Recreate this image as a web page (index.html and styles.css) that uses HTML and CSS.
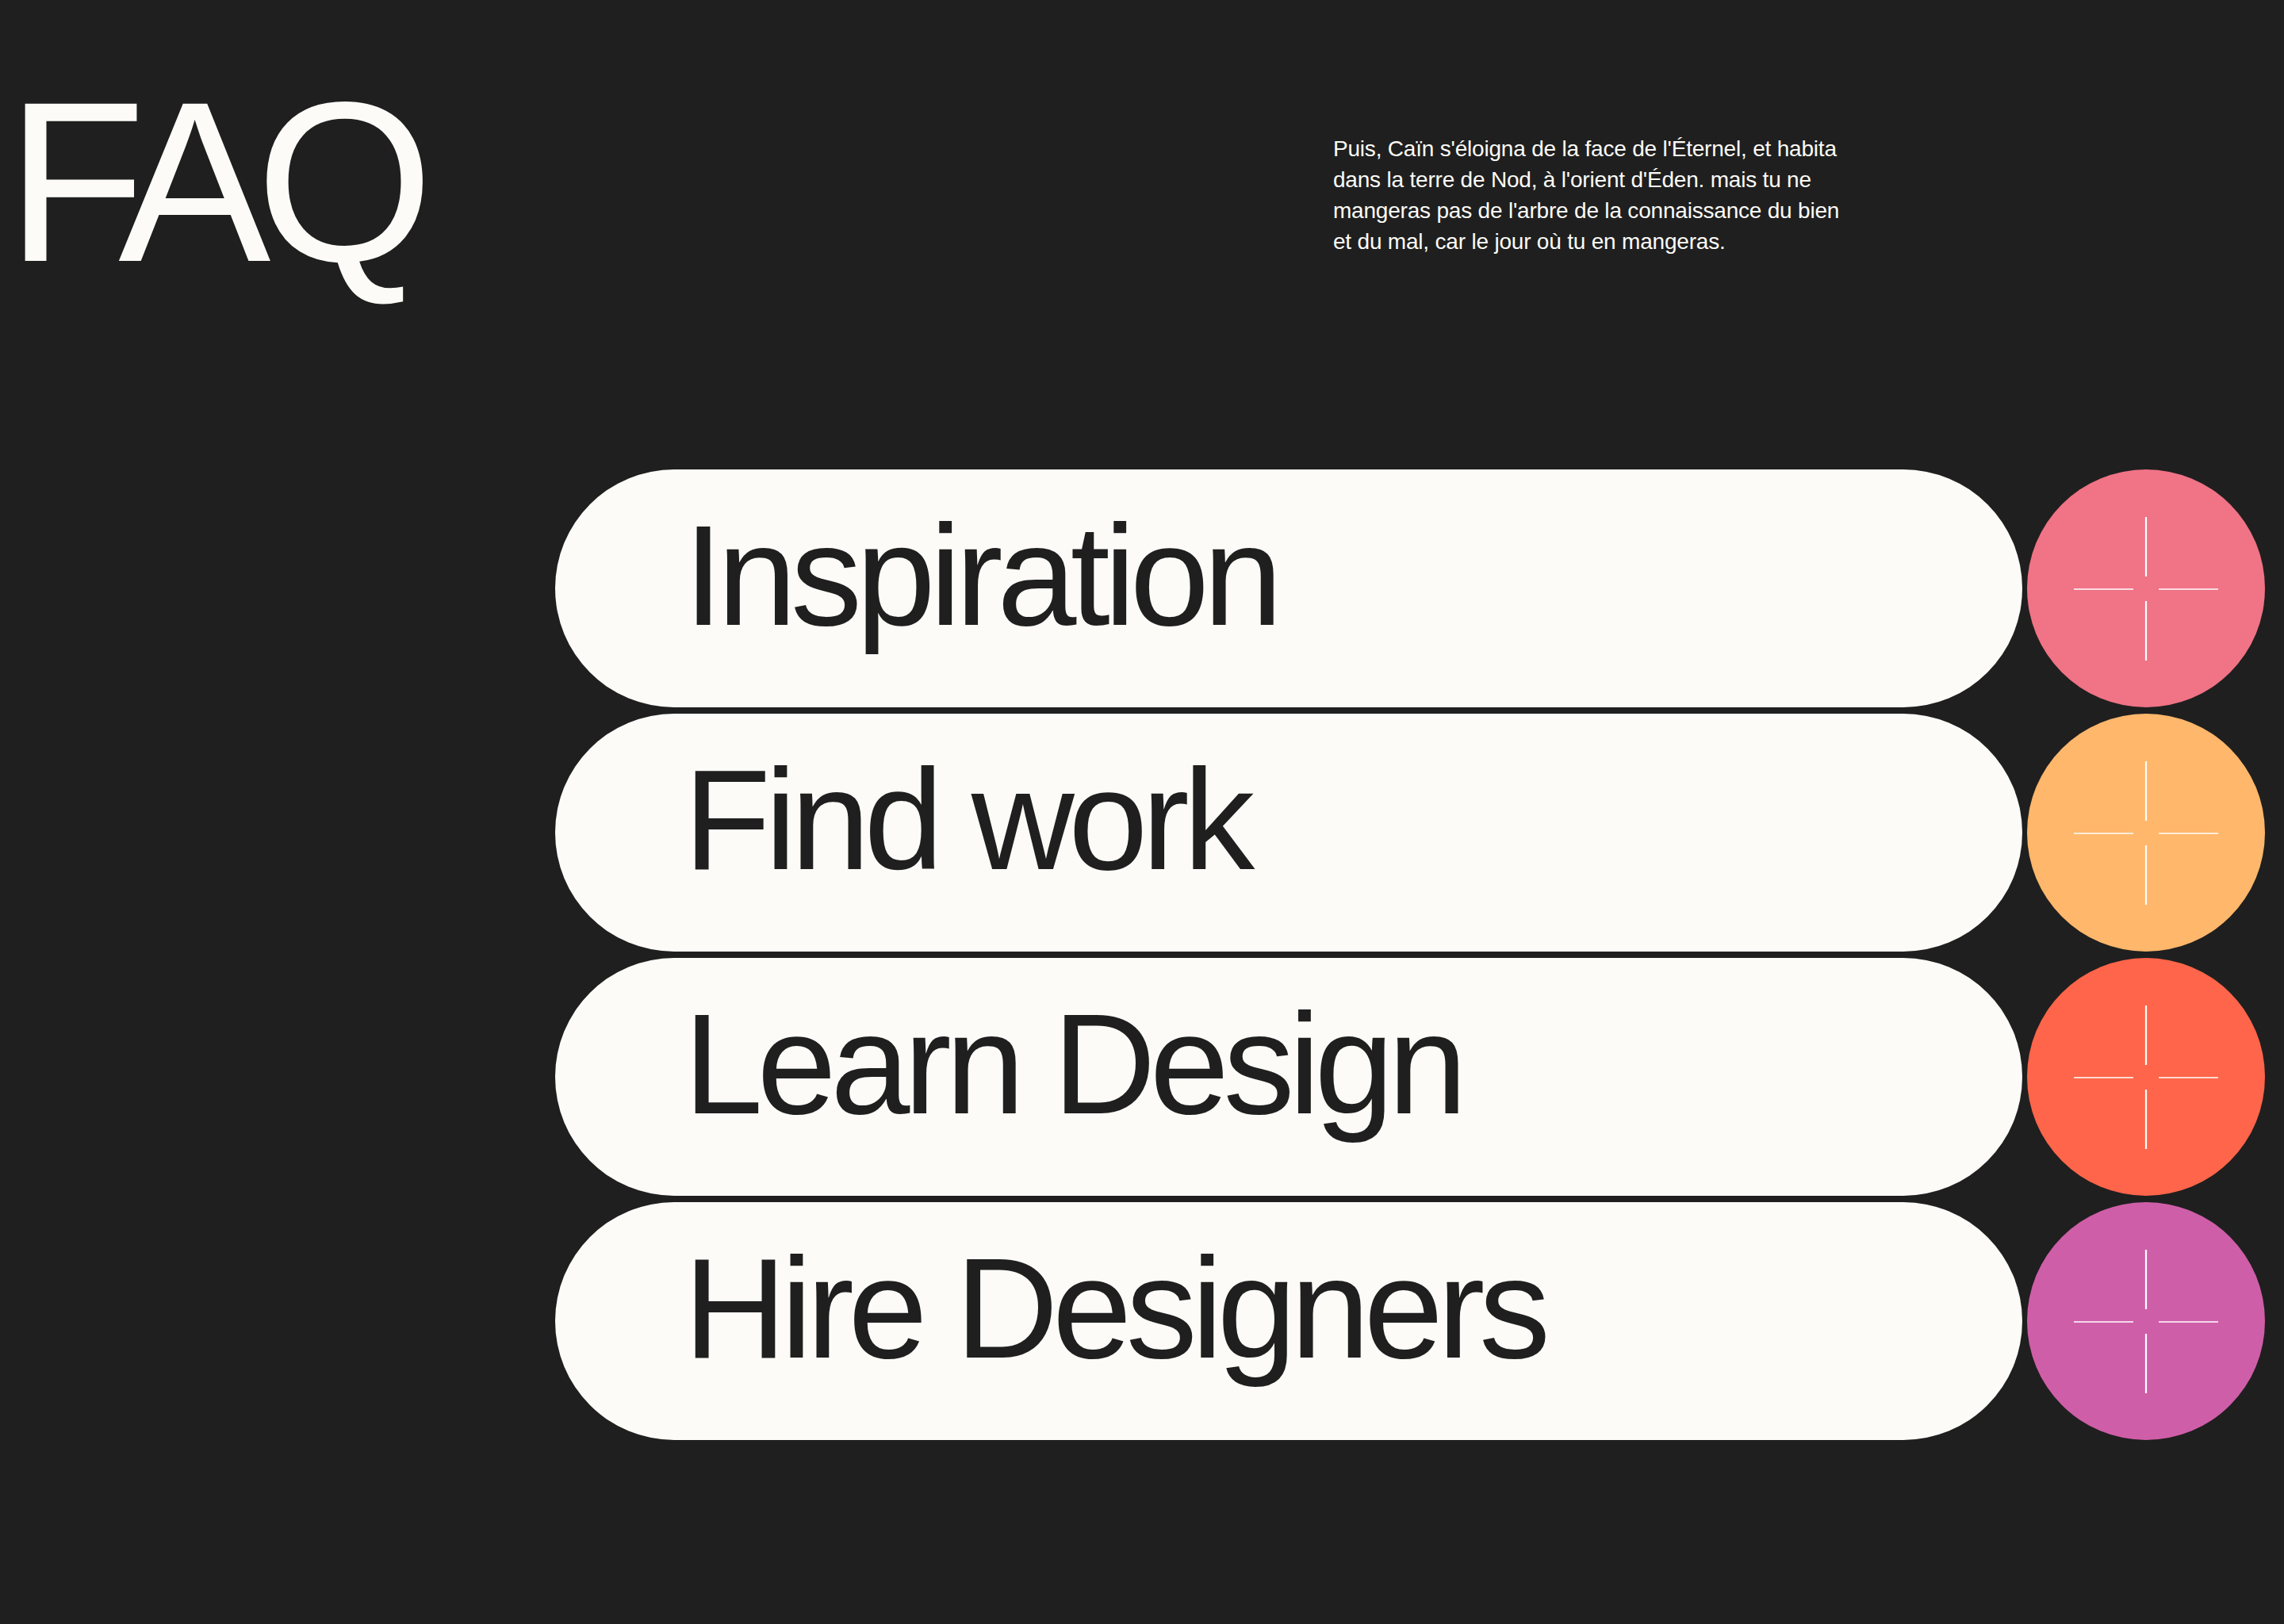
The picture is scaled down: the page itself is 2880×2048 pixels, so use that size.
FILE: index.html
```html
<!DOCTYPE html>
<html lang="fr">
<head>
<meta charset="utf-8">
<title>FAQ</title>
<link rel="stylesheet" href="styles.css">
</head>
<body>
<main class="page">
  <header class="header">
    <h1 class="title">FAQ</h1>
    <p class="intro">Puis, Caïn s'éloigna de la face de l'Éternel, et habita<br>dans la terre de Nod, à l'orient d'Éden. mais tu ne<br>mangeras pas de l'arbre de la connaissance du bien<br>et du mal, car le jour où tu en mangeras.</p>
  </header>
  <ul class="faq">
    <li class="row">
      <div class="pill">Inspiration</div>
      <button class="toggle toggle-pink" aria-label="Ouvrir">
        <svg class="plus" viewBox="0 0 300 300"><path class="v" d="M150 60V135M150 166V241"/><path class="h" d="M59 151H134M166 151H241"/></svg>
      </button>
    </li>
    <li class="row">
      <div class="pill">Find work</div>
      <button class="toggle toggle-orange" aria-label="Ouvrir">
        <svg class="plus" viewBox="0 0 300 300"><path class="v" d="M150 60V135M150 166V241"/><path class="h" d="M59 151H134M166 151H241"/></svg>
      </button>
    </li>
    <li class="row">
      <div class="pill">Learn Design</div>
      <button class="toggle toggle-red" aria-label="Ouvrir">
        <svg class="plus" viewBox="0 0 300 300"><path class="v" d="M150 60V135M150 166V241"/><path class="h" d="M59 151H134M166 151H241"/></svg>
      </button>
    </li>
    <li class="row">
      <div class="pill">Hire Designers</div>
      <button class="toggle toggle-magenta" aria-label="Ouvrir">
        <svg class="plus" viewBox="0 0 300 300"><path class="v" d="M150 60V135M150 166V241"/><path class="h" d="M59 151H134M166 151H241"/></svg>
      </button>
    </li>
  </ul>
</main>
</body>
</html>
```

FILE: styles.css
```css
html, body {
  margin: 0;
  padding: 0;
  background: #1f1f1f;
}

body {
  font-family: "Liberation Sans", Arial, sans-serif;
  color: #fcfbf7;
}

.page {
  width: 2880px;
  min-height: 2048px;
  box-sizing: border-box;
  padding-top: 84px;
}

.header {
  display: flex;
  align-items: flex-start;
}

.title {
  flex: 0 0 1681px;
  box-sizing: border-box;
  margin: 0;
  padding-left: 8px;
  font-size: 288px;
  line-height: 290px;
  height: 290px;
  font-weight: 400;
  letter-spacing: -0.065em;
  color: #fcfbf7;
}

.intro {
  margin: 84px 0 0;
  font-size: 28px;
  line-height: 39px;
  letter-spacing: -0.2px;
  color: #fcfbf7;
  white-space: nowrap;
}

.faq {
  list-style: none;
  margin: 218px 0 0;
  padding: 0 24px 0 0;
  display: flex;
  flex-direction: column;
  align-items: flex-end;
  gap: 8px;
}

.row {
  display: flex;
  align-items: center;
  gap: 6px;
}

.pill {
  width: 1850px;
  height: 300px;
  box-sizing: border-box;
  border-radius: 150px;
  background: #fcfbf7;
  color: #1f1f1f;
  padding: 44px 0 0 162px;
  font-size: 180px;
  line-height: 180px;
  letter-spacing: -7.5px;
  white-space: nowrap;
}

.toggle {
  width: 300px;
  height: 300px;
  border: 0;
  padding: 0;
  margin: 0;
  border-radius: 50%;
  display: flex;
  align-items: center;
  justify-content: center;
  cursor: pointer;
}

.toggle-pink { background: #f07386; }
.toggle-orange { background: #ffb76b; }
.toggle-red { background: #ff654a; }
.toggle-magenta { background: #cf5ea8; }

.plus {
  width: 300px;
  height: 300px;
  display: block;
  fill: none;
  stroke: #ffffff;
}

.plus .v { stroke-width: 2.2; }
.plus .h { stroke-width: 1.3; }
```
